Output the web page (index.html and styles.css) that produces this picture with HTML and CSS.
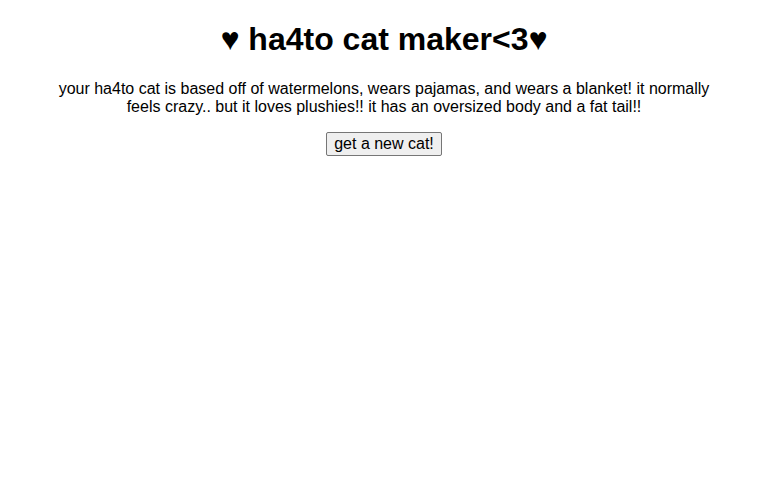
FILE: index.html
```html
<!DOCTYPE html>
<html>
<head>
<meta charset="utf-8">
<link rel="stylesheet" href="styles.css">
</head>
<body>
<h1 class="title">♥ ha4to cat maker&lt;3♥</h1>
<p class="desc">your ha4to cat is based off of watermelons, wears pajamas, and wears a blanket! it normally feels crazy.. but it loves plushies!! it has an oversized body and a fat tail!!</p>
<button class="btn">get a new cat!</button>
</body>
</html>
```
FILE: styles.css
```css
body {
  margin: 0 8px;
  font-family: "Liberation Sans", Arial, sans-serif;
  text-align: center;
  color: #000;
  background: #fff;
}
.title {
  font-size: 32px;
  font-weight: bold;
  margin: 21.44px 0;
}
.desc {
  font-size: 16px;
  margin: 16px 0;
  padding: 0 40px;
}
.btn {
  font-family: "Liberation Sans", Arial, sans-serif;
  font-size: 16px;
  padding: 2px 7px;
  background: #efefef;
  border: 1px solid #767676;
  border-radius: 2px;
  color: #000;
}
```
